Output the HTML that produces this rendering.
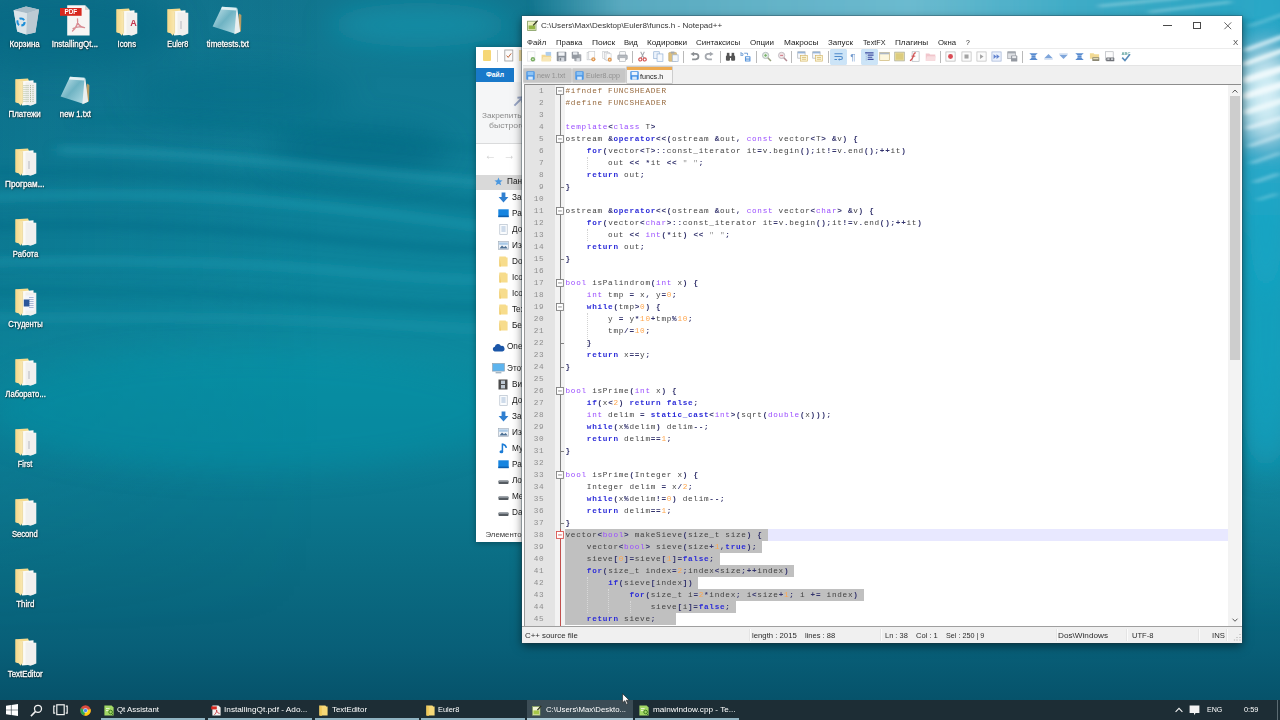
<!DOCTYPE html>
<html lang="ru"><head><meta charset="utf-8"><title>Desktop</title>
<style>
html,body{margin:0;padding:0;background:#0a6e86;}
body{width:1280px;height:720px;overflow:hidden;font-family:"Liberation Sans",sans-serif;}
#screen{position:relative;width:1280px;height:720px;overflow:hidden;background:#0b7d96;filter:blur(.32px);}
.t{position:absolute;white-space:nowrap;transform-origin:0 50%;}
.r{position:absolute;}
.abs{position:absolute;}
svg{position:absolute;overflow:visible;}
.lbl{position:absolute;white-space:nowrap;color:#fff;font-size:8.2px;line-height:10px;text-align:center;-webkit-text-stroke:.3px #fff;
  text-shadow:.5px 1px 1.5px rgba(0,0,0,.9),0 0 2.5px rgba(0,0,0,.55);transform-origin:50% 50%;}
.mono{font-family:"Liberation Mono",monospace;}
pre{margin:0;}
.code{position:absolute;left:565.5px;top:85.1px;font-family:"Liberation Mono",monospace;font-size:7.7px;line-height:12px;color:#424242;white-space:pre;letter-spacing:.714px;}
.code div{height:12px;}
.ln{position:absolute;left:524px;top:85.1px;width:20.4px;text-align:right;font-family:"Liberation Mono",monospace;font-size:7.7px;letter-spacing:.714px;line-height:12px;color:#8e8e8e;}
.ln div{height:12px;}
.k{color:#2b2bd8;font-weight:bold;}
.ty{color:#9a4dff;}
.pp{color:#96683c;}
.n{color:#ffa64d;}
.o{color:#34346e;font-weight:bold;}
.s{color:#909090;}
.sel{background:#c0c0c0;}

</style></head>
<body>
<div id="screen">
<svg id="bg" style="left:0;top:0" width="1280" height="720" viewBox="0 0 1280 720"><defs><linearGradient id="bgv" x1="0" y1="0" x2="0" y2="1"><stop offset="0" stop-color="#12768f"/><stop offset=".16" stop-color="#0f7b94"/><stop offset=".3" stop-color="#0d8199"/><stop offset=".5" stop-color="#0d8a9f"/><stop offset=".62" stop-color="#0c8097"/><stop offset=".8" stop-color="#0a6b82"/><stop offset=".9" stop-color="#085f78"/><stop offset=".975" stop-color="#06526a"/><stop offset="1" stop-color="#06526a"/></linearGradient><linearGradient id="bgh" x1="0" y1="0" x2="1" y2="0"><stop offset="0" stop-color="#0a5a78" stop-opacity=".22"/><stop offset=".25" stop-color="#0a5a78" stop-opacity="0"/><stop offset=".6" stop-color="#35c0dc" stop-opacity="0"/><stop offset="1" stop-color="#35c0dc" stop-opacity=".38"/></linearGradient><linearGradient id="mkg" x1="0" y1="0" x2="0" y2="1"><stop offset=".35" stop-color="#fff"/><stop offset=".88" stop-color="#000"/></linearGradient><mask id="mk" maskUnits="userSpaceOnUse" x="0" y="0" width="1280" height="720"><rect width="1280" height="720" fill="url(#mkg)"/></mask><linearGradient id="tsg" x1="0" y1="0" x2="1" y2="0"><stop offset="0" stop-color="#62b0c5" stop-opacity="0"/><stop offset=".12" stop-color="#62b0c5" stop-opacity=".9"/><stop offset=".5" stop-color="#74c0d4" stop-opacity=".92"/><stop offset=".72" stop-color="#45b2cd" stop-opacity=".85"/><stop offset="1" stop-color="#27a6c6" stop-opacity=".85"/></linearGradient><filter id="bl8" x="-20%" y="-100%" width="140%" height="300%"><feGaussianBlur stdDeviation="7 4"/></filter><filter id="bl3" x="-20%" y="-100%" width="140%" height="300%"><feGaussianBlur stdDeviation="3 1.6"/></filter><filter id="bl14" x="-30%" y="-60%" width="160%" height="220%"><feGaussianBlur stdDeviation="14"/></filter></defs><rect width="1280" height="720" fill="url(#bgv)"/><rect width="1280" height="720" fill="url(#bgh)" mask="url(#mk)"/><g filter="url(#bl14)"><ellipse cx="360" cy="150" rx="90" ry="26" fill="#0a6580" opacity=".55"/><ellipse cx="240" cy="95" rx="110" ry="30" fill="#0a6882" opacity=".4"/><ellipse cx="60" cy="30" rx="120" ry="40" fill="#0a6480" opacity=".45"/><ellipse cx="420" cy="25" rx="90" ry="22" fill="#16a0b8" opacity=".5"/><ellipse cx="250" cy="410" rx="260" ry="60" fill="#1095aa" opacity=".4"/><ellipse cx="1266" cy="120" rx="34" ry="170" fill="#27aacb" opacity=".9"/><ellipse cx="1266" cy="96" rx="26" ry="44" fill="#e4f6fa" opacity=".95"/><ellipse cx="1266" cy="330" rx="32" ry="140" fill="#0fa2c2" opacity=".7"/></g><rect x="530" y="-6" width="760" height="24" fill="url(#tsg)" filter="url(#bl3)"/><g filter="url(#bl8)" fill="none" stroke-linecap="round"><path d="M60 150 Q180 152 290 164 T500 184" stroke="#27a8be" stroke-width="7" opacity=".5"/><path d="M-10 197 Q120 192 220 198 T500 229" stroke="#25a6bc" stroke-width="7" opacity=".5"/><path d="M-10 226 Q160 222 300 236 T500 250" stroke="#0a6a85" stroke-width="8" opacity=".5"/><path d="M-10 262 Q200 258 330 270 T500 279" stroke="#27a8be" stroke-width="6" opacity=".45"/><path d="M-10 292 Q200 290 330 300 T500 306" stroke="#0a6f88" stroke-width="8" opacity=".45"/><path d="M-10 318 Q200 316 330 322 T500 330" stroke="#22a2b8" stroke-width="6" opacity=".4"/><path d="M-10 172 Q140 170 260 182 T500 206" stroke="#0a6a85" stroke-width="8" opacity=".45"/><path d="M80 120 Q200 118 300 130 T500 150" stroke="#0b6c87" stroke-width="8" opacity=".35"/></g><g filter="url(#bl3)" fill="none" stroke="#f2fbfd" stroke-linecap="round"><path d="M1246 50 L1284 36" stroke-width="4" opacity=".75"/><path d="M1245 64 L1284 50" stroke-width="5" opacity=".85"/><path d="M1246 80 L1284 68" stroke-width="7" opacity=".9"/><path d="M1246 96 L1284 84" stroke-width="7" opacity=".9"/><path d="M1247 112 L1284 100" stroke-width="6" opacity=".8"/><path d="M1248 128 L1284 117" stroke-width="4" opacity=".65"/><path d="M1250 146 L1284 134" stroke-width="3" opacity=".55"/><path d="M1252 163 L1280 153" stroke-width="2.500" opacity=".45"/><path d="M1255 182 L1278 174" stroke-width="2.500" opacity=".4"/><path d="M1258 200 L1276 194" stroke-width="2" opacity=".35"/><path d="M1250 26 L1284 14" stroke-width="2.500" opacity=".3"/><path d="M1100 6 L1180 -2" stroke-width="3" opacity=".3"/><path d="M1150 12 L1230 2" stroke-width="3" opacity=".3"/></g></svg>
<svg style="left:12.5px;top:6.0px" width="27" height="30" viewBox="0 0 27 30"><path d="M0.6 4.2 L13 0.6 L26 3.6 L22.4 26.4 L13.2 28.6 L4.2 25.4 Z" fill="#cfdbe3" opacity=".96"/><path d="M0.6 4.2 L13 0.6 L26 3.6 L14 7.2 Z" fill="#a9bcc8"/><path d="M14 7.2 L26 3.6 L22.4 26.4 L13.2 28.6 Z" fill="#bccad3"/><path d="M0.6 4.2 L14 7.2 L13.2 28.6 L4.2 25.4 Z" fill="#dbe5ea"/><circle cx="8" cy="16" r="3.6" fill="none" stroke="#1d8fd8" stroke-width="2" stroke-dasharray="5.2 2.3"/></svg>
<span class="lbl" style="left:9.38px;top:39.80px;transform:scaleX(0.9734)">Корзина</span>
<svg style="left:14.5px;top:77.8px" width="22" height="29" viewBox="0 0 22 29"><defs><linearGradient id="fg" x1="0" y1="0" x2="1" y2="0"><stop offset="0" stop-color="#f4d88a"/><stop offset="1" stop-color="#f9e8b2"/></linearGradient></defs><path d="M0.5 1.2 L13 0.6 L14 3 L17.5 3 L17.5 24 L0.5 24 Z" fill="#f4da8e"/><path d="M7 3.2 L18.5 2.2 L18.5 26.5 L7 27.5 Z" fill="#fbfaf6"/><path d="M10.5 4.2 L21.3 4.8 L21.3 25.6 L15.5 27.8 L10.5 26.2 Z" fill="#f1f0ee"/><path d="M9 7v17M11 7v17M13 7v17M15.5 7v17M18 7v17" stroke="#9fb08a" stroke-width=".8" stroke-dasharray="1.2 .8"/><path d="M0.5 1.2 L7.6 3.4 L7.6 24.8 L5.6 27.6 L3.6 25.2 L0.5 24.6 Z" fill="url(#fg)"/><path d="M7.6 3.4 L7.6 24.8 L5.6 27.6" fill="none" stroke="#d9b95f" stroke-width=".5" opacity=".7"/></svg>
<span class="lbl" style="left:8.17px;top:109.80px;transform:scaleX(0.9743)">Платежи</span>
<svg style="left:14.5px;top:147.8px" width="22" height="29" viewBox="0 0 22 29"><defs><linearGradient id="fg" x1="0" y1="0" x2="1" y2="0"><stop offset="0" stop-color="#f4d88a"/><stop offset="1" stop-color="#f9e8b2"/></linearGradient></defs><path d="M0.5 1.2 L13 0.6 L14 3 L17.5 3 L17.5 24 L0.5 24 Z" fill="#f4da8e"/><path d="M7 3.2 L18.5 2.2 L18.5 26.5 L7 27.5 Z" fill="#fbfaf6"/><path d="M10.5 4.2 L21.3 4.8 L21.3 25.6 L15.5 27.8 L10.5 26.2 Z" fill="#f1f0ee"/><path d="M14 13v8" stroke="#b7b9c0" stroke-width="1"/><path d="M0.5 1.2 L7.6 3.4 L7.6 24.8 L5.6 27.6 L3.6 25.2 L0.5 24.6 Z" fill="url(#fg)"/><path d="M7.6 3.4 L7.6 24.8 L5.6 27.6" fill="none" stroke="#d9b95f" stroke-width=".5" opacity=".7"/></svg>
<span class="lbl" style="left:5.45px;top:179.80px;transform:scaleX(0.9976)">Програм...</span>
<svg style="left:14.5px;top:217.8px" width="22" height="29" viewBox="0 0 22 29"><defs><linearGradient id="fg" x1="0" y1="0" x2="1" y2="0"><stop offset="0" stop-color="#f4d88a"/><stop offset="1" stop-color="#f9e8b2"/></linearGradient></defs><path d="M0.5 1.2 L13 0.6 L14 3 L17.5 3 L17.5 24 L0.5 24 Z" fill="#f4da8e"/><path d="M7 3.2 L18.5 2.2 L18.5 26.5 L7 27.5 Z" fill="#fbfaf6"/><path d="M10.5 4.2 L21.3 4.8 L21.3 25.6 L15.5 27.8 L10.5 26.2 Z" fill="#f1f0ee"/><path d="M0.5 1.2 L7.6 3.4 L7.6 24.8 L5.6 27.6 L3.6 25.2 L0.5 24.6 Z" fill="url(#fg)"/><path d="M7.6 3.4 L7.6 24.8 L5.6 27.6" fill="none" stroke="#d9b95f" stroke-width=".5" opacity=".7"/></svg>
<span class="lbl" style="left:11.72px;top:249.80px;transform:scaleX(0.9424)">Работа</span>
<svg style="left:14.5px;top:287.8px" width="22" height="29" viewBox="0 0 22 29"><defs><linearGradient id="fg" x1="0" y1="0" x2="1" y2="0"><stop offset="0" stop-color="#f4d88a"/><stop offset="1" stop-color="#f9e8b2"/></linearGradient></defs><path d="M0.5 1.2 L13 0.6 L14 3 L17.5 3 L17.5 24 L0.5 24 Z" fill="#f4da8e"/><path d="M7 3.2 L18.5 2.2 L18.5 26.5 L7 27.5 Z" fill="#fbfaf6"/><path d="M10.5 4.2 L21.3 4.8 L21.3 25.6 L15.5 27.8 L10.5 26.2 Z" fill="#f1f0ee"/><rect x="10" y="7.500" width="9.500" height="15" fill="#f4f6fb"/><path d="M14 9.500h4.600M14 11.500h4.600M14 13.500h4.600M14 15.500h4.600M14 17.500h4.600M14 19.500h4.600" stroke="#8d9fc4" stroke-width=".7"/><rect x="8.800" y="11.500" width="5.600" height="7" fill="#2b579a"/><path d="M0.5 1.2 L7.6 3.4 L7.6 24.8 L5.6 27.6 L3.6 25.2 L0.5 24.6 Z" fill="url(#fg)"/><path d="M7.6 3.4 L7.6 24.8 L5.6 27.6" fill="none" stroke="#d9b95f" stroke-width=".5" opacity=".7"/></svg>
<span class="lbl" style="left:6.69px;top:319.80px;transform:scaleX(0.9294)">Студенты</span>
<svg style="left:14.5px;top:357.8px" width="22" height="29" viewBox="0 0 22 29"><defs><linearGradient id="fg" x1="0" y1="0" x2="1" y2="0"><stop offset="0" stop-color="#f4d88a"/><stop offset="1" stop-color="#f9e8b2"/></linearGradient></defs><path d="M0.5 1.2 L13 0.6 L14 3 L17.5 3 L17.5 24 L0.5 24 Z" fill="#f4da8e"/><path d="M7 3.2 L18.5 2.2 L18.5 26.5 L7 27.5 Z" fill="#fbfaf6"/><path d="M10.5 4.2 L21.3 4.8 L21.3 25.6 L15.5 27.8 L10.5 26.2 Z" fill="#f1f0ee"/><path d="M14 13v8" stroke="#b7b9c0" stroke-width="1"/><path d="M0.5 1.2 L7.6 3.4 L7.6 24.8 L5.6 27.6 L3.6 25.2 L0.5 24.6 Z" fill="url(#fg)"/><path d="M7.6 3.4 L7.6 24.8 L5.6 27.6" fill="none" stroke="#d9b95f" stroke-width=".5" opacity=".7"/></svg>
<span class="lbl" style="left:3.65px;top:389.80px;transform:scaleX(0.9376)">Лаборато...</span>
<svg style="left:14.5px;top:427.8px" width="22" height="29" viewBox="0 0 22 29"><defs><linearGradient id="fg" x1="0" y1="0" x2="1" y2="0"><stop offset="0" stop-color="#f4d88a"/><stop offset="1" stop-color="#f9e8b2"/></linearGradient></defs><path d="M0.5 1.2 L13 0.6 L14 3 L17.5 3 L17.5 24 L0.5 24 Z" fill="#f4da8e"/><path d="M7 3.2 L18.5 2.2 L18.5 26.5 L7 27.5 Z" fill="#fbfaf6"/><path d="M10.5 4.2 L21.3 4.8 L21.3 25.6 L15.5 27.8 L10.5 26.2 Z" fill="#f1f0ee"/><path d="M14 13v8" stroke="#b7b9c0" stroke-width="1"/><path d="M0.5 1.2 L7.6 3.4 L7.6 24.8 L5.6 27.6 L3.6 25.2 L0.5 24.6 Z" fill="url(#fg)"/><path d="M7.6 3.4 L7.6 24.8 L5.6 27.6" fill="none" stroke="#d9b95f" stroke-width=".5" opacity=".7"/></svg>
<span class="lbl" style="left:17.28px;top:459.80px;transform:scaleX(0.9097)">First</span>
<svg style="left:14.5px;top:497.8px" width="22" height="29" viewBox="0 0 22 29"><defs><linearGradient id="fg" x1="0" y1="0" x2="1" y2="0"><stop offset="0" stop-color="#f4d88a"/><stop offset="1" stop-color="#f9e8b2"/></linearGradient></defs><path d="M0.5 1.2 L13 0.6 L14 3 L17.5 3 L17.5 24 L0.5 24 Z" fill="#f4da8e"/><path d="M7 3.2 L18.5 2.2 L18.5 26.5 L7 27.5 Z" fill="#fbfaf6"/><path d="M10.5 4.2 L21.3 4.8 L21.3 25.6 L15.5 27.8 L10.5 26.2 Z" fill="#f1f0ee"/><path d="M0.5 1.2 L7.6 3.4 L7.6 24.8 L5.6 27.6 L3.6 25.2 L0.5 24.6 Z" fill="url(#fg)"/><path d="M7.6 3.4 L7.6 24.8 L5.6 27.6" fill="none" stroke="#d9b95f" stroke-width=".5" opacity=".7"/></svg>
<span class="lbl" style="left:11.10px;top:529.80px;transform:scaleX(0.9349)">Second</span>
<svg style="left:14.5px;top:567.8px" width="22" height="29" viewBox="0 0 22 29"><defs><linearGradient id="fg" x1="0" y1="0" x2="1" y2="0"><stop offset="0" stop-color="#f4d88a"/><stop offset="1" stop-color="#f9e8b2"/></linearGradient></defs><path d="M0.5 1.2 L13 0.6 L14 3 L17.5 3 L17.5 24 L0.5 24 Z" fill="#f4da8e"/><path d="M7 3.2 L18.5 2.2 L18.5 26.5 L7 27.5 Z" fill="#fbfaf6"/><path d="M10.5 4.2 L21.3 4.8 L21.3 25.6 L15.5 27.8 L10.5 26.2 Z" fill="#f1f0ee"/><path d="M0.5 1.2 L7.6 3.4 L7.6 24.8 L5.6 27.6 L3.6 25.2 L0.5 24.6 Z" fill="url(#fg)"/><path d="M7.6 3.4 L7.6 24.8 L5.6 27.6" fill="none" stroke="#d9b95f" stroke-width=".5" opacity=".7"/></svg>
<span class="lbl" style="left:16.03px;top:599.80px;transform:scaleX(0.9769)">Third</span>
<svg style="left:14.5px;top:637.8px" width="22" height="29" viewBox="0 0 22 29"><defs><linearGradient id="fg" x1="0" y1="0" x2="1" y2="0"><stop offset="0" stop-color="#f4d88a"/><stop offset="1" stop-color="#f9e8b2"/></linearGradient></defs><path d="M0.5 1.2 L13 0.6 L14 3 L17.5 3 L17.5 24 L0.5 24 Z" fill="#f4da8e"/><path d="M7 3.2 L18.5 2.2 L18.5 26.5 L7 27.5 Z" fill="#fbfaf6"/><path d="M10.5 4.2 L21.3 4.8 L21.3 25.6 L15.5 27.8 L10.5 26.2 Z" fill="#f1f0ee"/><path d="M0.5 1.2 L7.6 3.4 L7.6 24.8 L5.6 27.6 L3.6 25.2 L0.5 24.6 Z" fill="url(#fg)"/><path d="M7.6 3.4 L7.6 24.8 L5.6 27.6" fill="none" stroke="#d9b95f" stroke-width=".5" opacity=".7"/></svg>
<span class="lbl" style="left:7.27px;top:669.80px;transform:scaleX(0.9600)">TextEditor</span>
<svg style="left:58.5px;top:5.0px" width="32" height="32" viewBox="0 0 32 32"><path d="M8.2 0.2 L26 0.2 L30.6 5 L30.6 30.6 L8.2 30.6 Z" fill="#f7f5f4"/><path d="M26 0.2 L30.6 5 L26 5 Z" fill="#d8d4d2"/><path d="M18.5 14 C19.5 18 17 23 13.5 26 M18.5 14 C18 19 21 22 25.5 22.6 M14 23.5 C17 21.6 21 21.4 25.5 22.6" fill="none" stroke="#d98d94" stroke-width="1.3" stroke-linecap="round"/><rect x="1" y="3" width="21.6" height="7.8" fill="#d8281f"/><text x="11.8" y="9.3" font-family="Liberation Sans, sans-serif" font-weight="bold" font-size="6.4" fill="#fff" text-anchor="middle">PDF</text></svg>
<span class="lbl" style="left:51.27px;top:39.80px;transform:scaleX(0.9697)">InstallingQt...</span>
<svg style="left:115.8px;top:7.8px" width="22" height="29" viewBox="0 0 22 29"><defs><linearGradient id="fg" x1="0" y1="0" x2="1" y2="0"><stop offset="0" stop-color="#f4d88a"/><stop offset="1" stop-color="#f9e8b2"/></linearGradient></defs><path d="M0.5 1.2 L13 0.6 L14 3 L17.5 3 L17.5 24 L0.5 24 Z" fill="#f4da8e"/><path d="M7 3.2 L18.5 2.2 L18.5 26.5 L7 27.5 Z" fill="#fbfaf6"/><path d="M10.5 4.2 L21.3 4.8 L21.3 25.6 L15.5 27.8 L10.5 26.2 Z" fill="#f1f0ee"/><text x="14.2" y="17.5" font-family="Liberation Sans, sans-serif" font-weight="bold" font-size="9" fill="#c2334d">A</text><path d="M0.5 1.2 L7.6 3.4 L7.6 24.8 L5.6 27.6 L3.6 25.2 L0.5 24.6 Z" fill="url(#fg)"/><path d="M7.6 3.4 L7.6 24.8 L5.6 27.6" fill="none" stroke="#d9b95f" stroke-width=".5" opacity=".7"/></svg>
<span class="lbl" style="left:116.95px;top:39.90px;transform:scaleX(0.9440)">Icons</span>
<svg style="left:166.5px;top:7.8px" width="22" height="29" viewBox="0 0 22 29"><defs><linearGradient id="fg" x1="0" y1="0" x2="1" y2="0"><stop offset="0" stop-color="#f4d88a"/><stop offset="1" stop-color="#f9e8b2"/></linearGradient></defs><path d="M0.5 1.2 L13 0.6 L14 3 L17.5 3 L17.5 24 L0.5 24 Z" fill="#f4da8e"/><path d="M7 3.2 L18.5 2.2 L18.5 26.5 L7 27.5 Z" fill="#fbfaf6"/><path d="M10.5 4.2 L21.3 4.8 L21.3 25.6 L15.5 27.8 L10.5 26.2 Z" fill="#f1f0ee"/><path d="M14 13v8" stroke="#b7b9c0" stroke-width="1"/><path d="M0.5 1.2 L7.6 3.4 L7.6 24.8 L5.6 27.6 L3.6 25.2 L0.5 24.6 Z" fill="url(#fg)"/><path d="M7.6 3.4 L7.6 24.8 L5.6 27.6" fill="none" stroke="#d9b95f" stroke-width=".5" opacity=".7"/></svg>
<span class="lbl" style="left:165.65px;top:39.90px;transform:scaleX(0.8860)">Euler8</span>
<svg style="left:212.0px;top:6.0px" width="31" height="29" viewBox="0 0 31 29"><defs><linearGradient id="ng" x1="0" y1="0" x2="1" y2="1"><stop offset="0" stop-color="#cfe9ef"/><stop offset=".5" stop-color="#6fb3c3"/><stop offset="1" stop-color="#b4dde6"/></linearGradient></defs><path d="M27 7.500 L29.400 9 L29 25.200 L24 27.400 Z" fill="#b79b63"/><path d="M11 1.4 L25.4 2.4 L28.2 25.8 L22.6 28.2 Z" fill="#e9eff0"/><path d="M10 0.8 L24.6 1.8 L22.4 27.6 L0.6 20.6 Z" fill="url(#ng)"/><path d="M10 0.8 L24.6 1.8 L24.3 4.6 L9 3.4 Z" fill="#eef7f8" opacity=".85"/></svg>
<span class="lbl" style="left:206.33px;top:39.90px;transform:scaleX(0.9694)">timetests.txt</span>
<svg style="left:60.0px;top:76.0px" width="31" height="29" viewBox="0 0 31 29"><defs><linearGradient id="ng" x1="0" y1="0" x2="1" y2="1"><stop offset="0" stop-color="#cfe9ef"/><stop offset=".5" stop-color="#6fb3c3"/><stop offset="1" stop-color="#b4dde6"/></linearGradient></defs><path d="M27 7.500 L29.400 9 L29 25.200 L24 27.400 Z" fill="#b79b63"/><path d="M11 1.4 L25.4 2.4 L28.2 25.8 L22.6 28.2 Z" fill="#e9eff0"/><path d="M10 0.8 L24.6 1.8 L22.4 27.6 L0.6 20.6 Z" fill="url(#ng)"/><path d="M10 0.8 L24.6 1.8 L24.3 4.6 L9 3.4 Z" fill="#eef7f8" opacity=".85"/></svg>
<span class="lbl" style="left:58.99px;top:109.80px;transform:scaleX(0.9508)">new 1.txt</span>
<div class="r" style="left:476.3px;top:46.9px;width:53.69999999999999px;height:494.9px;background:#ffffff;box-shadow:0 1px 6px rgba(0,0,0,.35);"></div>
<div class="r" style="left:482.6px;top:50.4px;width:8.4px;height:10.8px;background:#f6d776;border-radius:1px;"></div>
<div class="r" style="left:497.2px;top:50px;width:0.8px;height:11.5px;background:#d0d0d0;"></div>
<svg style="left:503.600px;top:49.200px" width="10" height="13" viewBox="0 0 10 13"><rect x=".8" y="1" width="8" height="11" fill="#fbfbfb" stroke="#9c9c9c" stroke-width=".8"/><path d="M2.6 6.6l1.6 1.8 3-4" fill="none" stroke="#c0673a" stroke-width="1"/></svg>
<div class="r" style="left:518.8px;top:50.4px;width:6px;height:10.8px;background:#f3dfa0;"></div>
<div class="r" style="left:476.3px;top:67.5px;width:38px;height:14.5px;background:#1979ca;"></div>
<span class="t" style="left:486.00px;top:70.24px;font-size:7.6px;line-height:9.12px;color:#fff;font-weight:bold;transform:scaleX(0.8905);">Файл</span>
<div class="r" style="left:476.3px;top:82px;width:53.69999999999999px;height:61.5px;background:#f5f6f7;"></div>
<div class="r" style="left:476.3px;top:143px;width:53.69999999999999px;height:1px;background:#dadbdc;"></div>
<svg style="left:511.500px;top:94px" width="14" height="14" viewBox="0 0 14 14"><path d="M2.400 11.600 L9 5 M5.400 3.800 L10.600 3.400 L10.200 8.600" fill="none" stroke="#98a6c6" stroke-width="1.900"/></svg>
<span class="t" style="left:482.00px;top:110.68px;font-size:7.7px;line-height:9.24px;color:#8c8c8c;transform:scaleX(1.0726);">Закрепить на</span>
<span class="t" style="left:488.50px;top:120.58px;font-size:7.7px;line-height:9.24px;color:#8c8c8c;transform:scaleX(1.1279);">быстрого</span>
<span class="t" style="left:484.60px;top:148.10px;font-size:12px;line-height:14.40px;color:#cdcdcd;">←</span>
<span class="t" style="left:503.60px;top:148.10px;font-size:12px;line-height:14.40px;color:#cdcdcd;">→</span>
<div class="r" style="left:476.3px;top:175px;width:53.69999999999999px;height:14.5px;background:#d9d9d9;"></div>
<svg style="left:494.4px;top:177.2px" width="9" height="9" viewBox="0 0 11 11"><path d="M5.5 .6 L6.9 4 L10.5 4.2 L7.7 6.5 L8.7 10.2 L5.5 8.2 L2.3 10.2 L3.3 6.5 L.5 4.2 L4.1 4 Z" fill="#4a98e0"/></svg>
<span class="t" style="left:507.00px;top:177.28px;font-size:8.2px;line-height:9.84px;color:#1a1a1a;">Панель</span>
<svg style="left:498px;top:192.3px" width="11" height="11" viewBox="0 0 11 11"><path d="M3.6 .5h3.8v4.6h3L5.5 10.4 .6 5.100h3z" fill="#2f7fd0"/></svg>
<span class="t" style="left:512.00px;top:193.08px;font-size:8.2px;line-height:9.84px;color:#1a1a1a;">Загрузки</span>
<svg style="left:498px;top:209.3px" width="11" height="9" viewBox="0 0 11 9"><rect x=".3" y=".3" width="10.4" height="7.6" fill="#1584e0"/><rect x=".3" y="6.6" width="10.4" height="1.6" fill="#0c5fb0"/></svg>
<span class="t" style="left:512.00px;top:209.08px;font-size:8.2px;line-height:9.84px;color:#1a1a1a;">Рабочий</span>
<svg style="left:499px;top:224.3px" width="9" height="11" viewBox="0 0 9 11"><rect x=".8" y=".5" width="7.4" height="10" fill="#fafcfe" stroke="#a9b6c4" stroke-width=".6"/><path d="M2.4 3h4.2M2.4 5h4.2M2.4 7h4.2" stroke="#7d9fc6" stroke-width=".7"/></svg>
<span class="t" style="left:512.00px;top:225.08px;font-size:8.2px;line-height:9.84px;color:#1a1a1a;">Документы</span>
<svg style="left:498px;top:241.3px" width="11" height="9" viewBox="0 0 11 9"><rect x=".4" y=".4" width="10.2" height="8" fill="#eef3f8" stroke="#9aa8b6" stroke-width=".6"/><path d="M1.4 7.4 L4 4.4 L6 6.2 L7.6 5 L9.8 7.4 Z" fill="#4b6f93"/><rect x="1.2" y="1.4" width="8.6" height="2.4" fill="#a9c9e6"/></svg>
<span class="t" style="left:512.00px;top:241.08px;font-size:8.2px;line-height:9.84px;color:#1a1a1a;">Изображ</span>
<svg style="left:499px;top:256.3px" width="9" height="11" viewBox="0 0 9 11"><path d="M.4 .6h6.2l.8 1h1.2v9H.4z" fill="#f7dc8c"/><path d="M.4 .6v10h1.6z" fill="#efca68"/></svg>
<span class="t" style="left:512.00px;top:257.08px;font-size:8.2px;line-height:9.84px;color:#1a1a1a;">Docs</span>
<svg style="left:499px;top:272.3px" width="9" height="11" viewBox="0 0 9 11"><path d="M.4 .6h6.2l.8 1h1.2v9H.4z" fill="#f7dc8c"/><path d="M.4 .6v10h1.6z" fill="#efca68"/></svg>
<span class="t" style="left:512.00px;top:273.08px;font-size:8.2px;line-height:9.84px;color:#1a1a1a;">Icons</span>
<svg style="left:499px;top:288.3px" width="9" height="11" viewBox="0 0 9 11"><path d="M.4 .6h6.2l.8 1h1.2v9H.4z" fill="#f7dc8c"/><path d="M.4 .6v10h1.6z" fill="#efca68"/></svg>
<span class="t" style="left:512.00px;top:289.08px;font-size:8.2px;line-height:9.84px;color:#1a1a1a;">Icons</span>
<svg style="left:499px;top:304.3px" width="9" height="11" viewBox="0 0 9 11"><path d="M.4 .6h6.2l.8 1h1.2v9H.4z" fill="#f7dc8c"/><path d="M.4 .6v10h1.6z" fill="#efca68"/></svg>
<span class="t" style="left:512.00px;top:305.08px;font-size:8.2px;line-height:9.84px;color:#1a1a1a;">TextEd</span>
<svg style="left:499px;top:320.3px" width="9" height="11" viewBox="0 0 9 11"><path d="M.4 .6h6.2l.8 1h1.2v9H.4z" fill="#f7dc8c"/><path d="M.4 .6v10h1.6z" fill="#efca68"/></svg>
<span class="t" style="left:512.00px;top:321.08px;font-size:8.2px;line-height:9.84px;color:#1a1a1a;">Белый</span>
<svg style="left:492px;top:342.5px" width="13" height="9" viewBox="0 0 13 9"><path d="M2.6 8.4a2.4 2.4 0 0 1 .2-4.700a3.300 3.300 0 0 1 6.200-.8a2.800 2.800 0 0 1 1.400 5.500z" fill="#1b56a8"/></svg>
<span class="t" style="left:507.00px;top:342.28px;font-size:8.2px;line-height:9.84px;color:#1a1a1a;">OneDrive</span>
<svg style="left:492px;top:363px" width="13" height="11" viewBox="0 0 13 11"><rect x=".6" y=".5" width="11.8" height="7.6" fill="#5db4ee" stroke="#8fa3b4" stroke-width=".7"/><rect x="3.6" y="9.200" width="5.8" height="1.1" fill="#8fa3b4"/></svg>
<span class="t" style="left:507.00px;top:363.68px;font-size:8.2px;line-height:9.84px;color:#1a1a1a;">Этот комп</span>
<svg style="left:498px;top:379.1px" width="10" height="11" viewBox="0 0 10 11"><rect x=".5" y=".5" width="9" height="10" fill="#4c4c4c"/><rect x="3" y="1.6" width="4" height="3.400" fill="#bfc9d3"/><rect x="3" y="6" width="4" height="3.400" fill="#bfc9d3"/></svg>
<span class="t" style="left:512.00px;top:379.88px;font-size:8.2px;line-height:9.84px;color:#1a1a1a;">Видео</span>
<svg style="left:499px;top:395.1px" width="9" height="11" viewBox="0 0 9 11"><rect x=".8" y=".5" width="7.4" height="10" fill="#fafcfe" stroke="#a9b6c4" stroke-width=".6"/><path d="M2.4 3h4.2M2.4 5h4.2M2.4 7h4.2" stroke="#7d9fc6" stroke-width=".7"/></svg>
<span class="t" style="left:512.00px;top:395.88px;font-size:8.2px;line-height:9.84px;color:#1a1a1a;">Документы</span>
<svg style="left:498px;top:411.1px" width="11" height="11" viewBox="0 0 11 11"><path d="M3.6 .5h3.8v4.6h3L5.5 10.4 .6 5.100h3z" fill="#2f7fd0"/></svg>
<span class="t" style="left:512.00px;top:411.88px;font-size:8.2px;line-height:9.84px;color:#1a1a1a;">Загрузки</span>
<svg style="left:498px;top:428.1px" width="11" height="9" viewBox="0 0 11 9"><rect x=".4" y=".4" width="10.2" height="8" fill="#eef3f8" stroke="#9aa8b6" stroke-width=".6"/><path d="M1.4 7.4 L4 4.4 L6 6.2 L7.6 5 L9.8 7.4 Z" fill="#4b6f93"/><rect x="1.2" y="1.4" width="8.6" height="2.4" fill="#a9c9e6"/></svg>
<span class="t" style="left:512.00px;top:427.88px;font-size:8.2px;line-height:9.84px;color:#1a1a1a;">Изображ</span>
<svg style="left:499px;top:443.1px" width="9" height="11" viewBox="0 0 9 11"><path d="M3.4 .6 L3.4 8.200 M3.4 .9 C5.400 1.400 7 2.600 7.400 4.800" fill="none" stroke="#1a7bd6" stroke-width="1.500"/><ellipse cx="2.400" cy="8.800" rx="1.900" ry="1.500" fill="#1a7bd6"/></svg>
<span class="t" style="left:512.00px;top:443.88px;font-size:8.2px;line-height:9.84px;color:#1a1a1a;">Музыка</span>
<svg style="left:498px;top:460.1px" width="11" height="9" viewBox="0 0 11 9"><rect x=".3" y=".3" width="10.4" height="7.6" fill="#1584e0"/><rect x=".3" y="6.6" width="10.4" height="1.6" fill="#0c5fb0"/></svg>
<span class="t" style="left:512.00px;top:459.88px;font-size:8.2px;line-height:9.84px;color:#1a1a1a;">Рабочий</span>
<svg style="left:498px;top:479.1px" width="11" height="6" viewBox="0 0 11 6"><rect x=".5" y="1.500" width="10" height="3.600" rx=".8" fill="#555b61"/><rect x=".5" y="1.500" width="10" height="1.200" rx=".6" fill="#9aa2a9"/></svg>
<span class="t" style="left:512.00px;top:475.88px;font-size:8.2px;line-height:9.84px;color:#1a1a1a;">Локальн</span>
<svg style="left:498px;top:495.1px" width="11" height="6" viewBox="0 0 11 6"><rect x=".5" y="1.500" width="10" height="3.600" rx=".8" fill="#555b61"/><rect x=".5" y="1.500" width="10" height="1.200" rx=".6" fill="#9aa2a9"/></svg>
<span class="t" style="left:512.00px;top:491.88px;font-size:8.2px;line-height:9.84px;color:#1a1a1a;">Media</span>
<svg style="left:498px;top:511.1px" width="11" height="6" viewBox="0 0 11 6"><rect x=".5" y="1.500" width="10" height="3.600" rx=".8" fill="#555b61"/><rect x=".5" y="1.500" width="10" height="1.200" rx=".6" fill="#9aa2a9"/></svg>
<span class="t" style="left:512.00px;top:507.88px;font-size:8.2px;line-height:9.84px;color:#1a1a1a;">Data</span>
<span class="t" style="left:485.50px;top:529.92px;font-size:7.8px;line-height:9.36px;color:#3c3c3c;">Элементов: 21</span>
<div class="r" style="left:522px;top:16px;width:720.4000000000001px;height:626.5px;background:#ffffff;box-shadow:0 3px 9px rgba(0,0,0,.5),0 0 0 .6px rgba(50,80,95,.6);"></div>
<svg style="left:527px;top:19.700px" width="12" height="11" viewBox="0 0 12 11"><rect x=".6" y="1.200" width="8.400" height="9.200" fill="#f2f5dc" stroke="#7f9a5a" stroke-width=".8"/><rect x="1.500" y="5.400" width="6.600" height="4" fill="#94b545"/><rect x="1.500" y="2.400" width="6.600" height="2.400" fill="#e9efb6"/><path d="M6.200 5.400 L10.600 .6" stroke="#30331f" stroke-width="1.300"/></svg>
<span class="t" style="left:541.30px;top:21.10px;font-size:8px;line-height:9.60px;color:#333;transform:scaleX(1.0063);">C:\Users\Max\Desktop\Euler8\funcs.h - Notepad++</span>
<div class="r" style="left:1162.6px;top:24.9px;width:9.8px;height:0.9px;background:#4a4a4a;"></div>
<div class="r" style="left:1193px;top:22.100px;width:5.600px;height:5.400px;border:.8px solid #4a4a4a;box-sizing:content-box"></div>
<svg style="left:1223.600px;top:21.800px" width="8" height="8" viewBox="0 0 8 8"><path d="M.4 .4l6.800 6.800M7.200 .4l-6.800 6.800" stroke="#4a4a4a" stroke-width=".85"/></svg>
<span class="t" style="left:527.10px;top:37.60px;font-size:8px;line-height:9.60px;color:#1c1c1c;transform:scaleX(0.9762);">Файл</span>
<span class="t" style="left:555.60px;top:37.60px;font-size:8px;line-height:9.60px;color:#1c1c1c;transform:scaleX(0.9733);">Правка</span>
<span class="t" style="left:591.60px;top:37.60px;font-size:8px;line-height:9.60px;color:#1c1c1c;transform:scaleX(1.0421);">Поиск</span>
<span class="t" style="left:624.00px;top:37.60px;font-size:8px;line-height:9.60px;color:#1c1c1c;transform:scaleX(0.9535);">Вид</span>
<span class="t" style="left:646.60px;top:37.60px;font-size:8px;line-height:9.60px;color:#1c1c1c;transform:scaleX(1.0208);">Кодировки</span>
<span class="t" style="left:696.30px;top:37.60px;font-size:8px;line-height:9.60px;color:#1c1c1c;transform:scaleX(0.9911);">Синтаксисы</span>
<span class="t" style="left:750.40px;top:37.60px;font-size:8px;line-height:9.60px;color:#1c1c1c;transform:scaleX(0.9969);">Опции</span>
<span class="t" style="left:784.10px;top:37.60px;font-size:8px;line-height:9.60px;color:#1c1c1c;transform:scaleX(1.0315);">Макросы</span>
<span class="t" style="left:827.90px;top:37.60px;font-size:8px;line-height:9.60px;color:#1c1c1c;transform:scaleX(0.9951);">Запуск</span>
<span class="t" style="left:863.00px;top:37.60px;font-size:8px;line-height:9.60px;color:#1c1c1c;transform:scaleX(0.9038);">TextFX</span>
<span class="t" style="left:894.80px;top:37.60px;font-size:8px;line-height:9.60px;color:#1c1c1c;transform:scaleX(1.0210);">Плагины</span>
<span class="t" style="left:938.00px;top:37.60px;font-size:8px;line-height:9.60px;color:#1c1c1c;transform:scaleX(0.9683);">Окна</span>
<span class="t" style="left:965.60px;top:37.60px;font-size:8px;line-height:9.60px;color:#1c1c1c;transform:scaleX(0.8542);">?</span>
<span class="t" style="left:1233.40px;top:38.04px;font-size:7.6px;line-height:9.12px;color:#444;transform:scaleX(1.0258);">X</span>
<div class="r" style="left:523px;top:48px;width:718.4000000000001px;height:0.8px;background:#ececec;"></div>
<div class="r" style="left:523px;top:65.3px;width:718.4000000000001px;height:0.8px;background:#e4e4e4;"></div>
<div class="r" style="left:831.3px;top:49.6px;width:15px;height:14.6px;background:#cce4f7;box-shadow:0 0 0 .5px #9ccaf0;"></div>
<div class="r" style="left:862.3px;top:49.6px;width:15px;height:14.6px;background:#cce4f7;box-shadow:0 0 0 .5px #9ccaf0;"></div>
<svg style="left:525.48px;top:50.88px;opacity:.8" width="11.04" height="11.04" viewBox="0 0 12 12"><rect x="2.8" y="0.8" width="8" height="10.2" fill="#fdfdfd" stroke="#d3d6da" stroke-width=".7"/><circle cx="8.600" cy="9" r="2.400" fill="#5a9a3c"/><circle cx="8.600" cy="9" r=".9" fill="#e9f6df"/></svg>
<svg style="left:540.68px;top:50.88px;opacity:.8" width="11.04" height="11.04" viewBox="0 0 12 12"><path d="M5 1h6v6H5z" fill="#9cc3ea"/><path d="M.6 4h4l1 1.200h5.400v6H.6z" fill="#f0cf7a"/><path d="M.6 11.200l1.800-4.600h9.200l-1.800 4.600z" fill="#f7e2a4"/></svg>
<svg style="left:555.88px;top:50.88px;opacity:.8" width="11.04" height="11.04" viewBox="0 0 12 12"><rect x=".8" y=".8" width="10.400" height="10.400" rx=".8" fill="#6d7580"/><rect x="2.600" y="1.400" width="6.800" height="3.800" fill="#eef1f5"/><rect x="3" y="7" width="6" height="4.200" fill="#c9ced6"/><rect x="4" y="7.800" width="1.600" height="2.600" fill="#565d67"/></svg>
<svg style="left:571.08px;top:50.88px;opacity:.8" width="11.04" height="11.04" viewBox="0 0 12 12"><rect x="3.600" y="3.600" width="7.600" height="7.600" rx=".8" fill="#8b9098"/><rect x=".8" y=".8" width="7.600" height="7.600" rx=".8" fill="#7a808a"/><rect x="2.200" y="1.400" width="4.800" height="2.600" fill="#e6e9ee"/><rect x="6" y="7.800" width="3.600" height="3.200" fill="#d5d9df"/></svg>
<svg style="left:586.48px;top:50.88px;opacity:.8" width="11.04" height="11.04" viewBox="0 0 12 12"><rect x="1.2" y="1.6" width="6" height="8" fill="#fbfbfb" stroke="#b7bbc0" stroke-width=".7"/><rect x="3" y="0.6" width="6.5" height="8.6" fill="#fdfdfd" stroke="#b7bbc0" stroke-width=".7"/><circle cx="8" cy="9" r="2.300" fill="#d9822b"/><circle cx="8" cy="9" r=".8" fill="#f8e3c8"/></svg>
<svg style="left:601.68px;top:50.88px;opacity:.8" width="11.04" height="11.04" viewBox="0 0 12 12"><rect x="0.8" y="0.6" width="5.5" height="7.6" fill="#fbfbfb" stroke="#b7bbc0" stroke-width=".7"/><rect x="2.6" y="1.8" width="5.5" height="7.6" fill="#fbfbfb" stroke="#b7bbc0" stroke-width=".7"/><rect x="4.4" y="3" width="5.5" height="7.6" fill="#fdfdfd" stroke="#b7bbc0" stroke-width=".7"/><circle cx="8.400" cy="9.400" r="2.200" fill="#d9822b"/><circle cx="8.400" cy="9.400" r=".8" fill="#f8e3c8"/></svg>
<svg style="left:616.88px;top:50.88px;opacity:.8" width="11.04" height="11.04" viewBox="0 0 12 12"><rect x="3" y=".8" width="6" height="4" fill="#f4f6f8" stroke="#8a8f96" stroke-width=".6"/><rect x=".8" y="4.400" width="10.400" height="4.800" rx=".8" fill="#a3a9b1" stroke="#737981" stroke-width=".6"/><rect x="2.600" y="7.400" width="6.800" height="3.800" fill="#f8f9fa" stroke="#8a8f96" stroke-width=".6"/></svg>
<div class="r" style="left:632.1px;top:50.5px;width:1px;height:12.5px;background:#b9b9b9;"></div>
<svg style="left:637.48px;top:50.88px;opacity:.8" width="11.04" height="11.04" viewBox="0 0 12 12"><path d="M4 .8L7.400 7.600M8 .8L4.600 7.600" stroke="#8b8f96" stroke-width="1.100"/><circle cx="3.600" cy="9.200" r="1.700" fill="none" stroke="#c62828" stroke-width="1.300"/><circle cx="8.400" cy="9.200" r="1.700" fill="none" stroke="#c62828" stroke-width="1.300"/></svg>
<svg style="left:652.78px;top:50.88px;opacity:.8" width="11.04" height="11.04" viewBox="0 0 12 12"><rect x="0.8" y="0.8" width="6" height="7.6" fill="#e9f1fb" stroke="#6f96c8" stroke-width=".7"/><rect x="4.4" y="3.2" width="6.4" height="8" fill="#f4f8fd" stroke="#6f96c8" stroke-width=".7"/></svg>
<svg style="left:668.28px;top:50.88px;opacity:.8" width="11.04" height="11.04" viewBox="0 0 12 12"><rect x=".8" y="1.600" width="8.400" height="9.600" rx=".8" fill="#d7b15c" stroke="#a8873f" stroke-width=".6"/><rect x="3" y=".6" width="4" height="2.200" fill="#8e939a"/><rect x="4.6" y="4.2" width="6.4" height="7.2" fill="#f1f6fc" stroke="#7f9cc4" stroke-width=".7"/></svg>
<div class="r" style="left:682.9px;top:50.5px;width:1px;height:12.5px;background:#b9b9b9;"></div>
<svg style="left:688.88px;top:50.88px;opacity:.8" width="11.04" height="11.04" viewBox="0 0 12 12"><path d="M4.800 3.200H7.400a2.900 2.900 0 0 1 0 5.800H3.400" fill="none" stroke="#6d7278" stroke-width="1.900"/><path d="M5.600 .8V5.600L1.600 3.200z" fill="#6d7278"/></svg>
<svg style="left:704.28px;top:50.88px;opacity:.8" width="11.04" height="11.04" viewBox="0 0 12 12"><path d="M7.200 3.200H4.600a2.900 2.900 0 0 0 0 5.800H8.600" fill="none" stroke="#8e939a" stroke-width="1.900"/><path d="M6.400 .8V5.600L10.400 3.200z" fill="#8e939a"/></svg>
<div class="r" style="left:719.5px;top:50.5px;width:1px;height:12.5px;background:#b9b9b9;"></div>
<svg style="left:724.88px;top:50.88px;opacity:.8" width="11.04" height="11.04" viewBox="0 0 12 12"><rect x="1" y="5" width="4.400" height="5.600" rx="1.200" fill="#2a2a2a"/><rect x="6.600" y="5" width="4.400" height="5.600" rx="1.200" fill="#2a2a2a"/><rect x="2" y="2" width="2.800" height="4" fill="#2a2a2a"/><rect x="7.200" y="2" width="2.800" height="4" fill="#2a2a2a"/><rect x="4.600" y="5.600" width="2.800" height="2" fill="#2a2a2a"/></svg>
<svg style="left:740.38px;top:50.88px;opacity:.8" width="11.04" height="11.04" viewBox="0 0 12 12"><text x=".4" y="5.600" font-family="Liberation Sans, sans-serif" font-size="6" font-weight="bold" fill="#2a6fc0">b</text><rect x="5.400" y="5.600" width="6" height="5.800" rx=".6" fill="#2e7ad1"/><rect x="6.600" y="6.600" width="3.600" height="1.600" fill="#e4effb"/><rect x="6.600" y="9.200" width="3.600" height="1.400" fill="#bcd6f2"/><path d="M4.600 2.400h3.600v2.200" fill="none" stroke="#2a6fc0" stroke-width=".9"/></svg>
<div class="r" style="left:756.1px;top:50.5px;width:1px;height:12.5px;background:#b9b9b9;"></div>
<svg style="left:761.48px;top:50.88px;opacity:.8" width="11.04" height="11.04" viewBox="0 0 12 12"><circle cx="5" cy="4.800" r="3.400" fill="#d9e8d6" stroke="#9aa3ab" stroke-width=".9"/><path d="M7.400 7.400L10.800 10.800" stroke="#7d8a5c" stroke-width="1.700"/><path d="M3.400 4.800h3.200M5 3.200v3.200" stroke="#4b9a3a" stroke-width=".9"/></svg>
<svg style="left:776.68px;top:50.88px;opacity:.8" width="11.04" height="11.04" viewBox="0 0 12 12"><circle cx="5" cy="4.800" r="3.400" fill="#ecdcdf" stroke="#a9a3ab" stroke-width=".9"/><path d="M7.400 7.400L10.800 10.800" stroke="#a0707a" stroke-width="1.700"/><path d="M3.400 4.800h3.200" stroke="#c03a4a" stroke-width=".9"/></svg>
<div class="r" style="left:791.3px;top:50.5px;width:1px;height:12.5px;background:#b9b9b9;"></div>
<svg style="left:796.78px;top:50.88px;opacity:.8" width="11.04" height="11.04" viewBox="0 0 12 12"><rect x="0.8" y="0.8" width="8" height="7" fill="#f6f7f9" stroke="#8f96a0" stroke-width=".7"/><rect x=".8" y=".8" width="8" height="1.800" fill="#7ea2cf"/><rect x="4" y="5" width="7.2" height="6" fill="#fbf3d0" stroke="#c9a23a" stroke-width=".7"/><path d="M5.400 7h4.400M5.400 9h4.400" stroke="#c9a23a" stroke-width=".8"/></svg>
<svg style="left:812.08px;top:50.88px;opacity:.8" width="11.04" height="11.04" viewBox="0 0 12 12"><rect x="0.8" y="0.8" width="8" height="7" fill="#f6f7f9" stroke="#8f96a0" stroke-width=".7"/><rect x=".8" y=".8" width="8" height="1.800" fill="#7ea2cf"/><rect x="4" y="5" width="7.2" height="6" fill="#fbf3d0" stroke="#c9a23a" stroke-width=".7"/><path d="M5.400 7h4.400M5.400 9h4.400" stroke="#c9a23a" stroke-width=".8"/></svg>
<div class="r" style="left:827.5px;top:50.5px;width:1px;height:12.5px;background:#b9b9b9;"></div>
<svg style="left:833.28px;top:50.88px;opacity:.8" width="11.04" height="11.04" viewBox="0 0 12 12"><path d="M1.600 3h8.800M1.600 6h7a1.600 1.600 0 0 1 0 3.200H6.400M1.600 9.200h2.800" fill="none" stroke="#2f74c0" stroke-width="1.200"/><path d="M7.200 7.800v2.800L5.400 9.200z" fill="#2f74c0"/></svg>
<svg style="left:847.88px;top:50.88px;opacity:.8" width="11.04" height="11.04" viewBox="0 0 12 12"><text x="2.400" y="10" font-family="Liberation Sans, sans-serif" font-size="10.500" fill="#4d7fc0">¶</text></svg>
<svg style="left:864.28px;top:50.88px;opacity:.8" width="11.04" height="11.04" viewBox="0 0 12 12"><path d="M2.400 1.200v9.600" stroke="#6b7fb0" stroke-width=".8" stroke-dasharray="1 1"/><path d="M1.200 2h9.200M4 4.400h6.400M4 6.800h5M4 9.200h6.400" stroke="#1f2a8c" stroke-width="1.300"/></svg>
<svg style="left:878.88px;top:50.88px;opacity:.8" width="11.04" height="11.04" viewBox="0 0 12 12"><rect x="0.8" y="1.6" width="10.4" height="8.8" fill="#fdf6d8" stroke="#b89a45" stroke-width=".7"/><rect x=".8" y="1.600" width="10.400" height="2" fill="#9aa7b8"/></svg>
<svg style="left:893.88px;top:50.88px;opacity:.8" width="11.04" height="11.04" viewBox="0 0 12 12"><rect x="0.8" y="1.2" width="10.4" height="9.6" fill="#e6d68a" stroke="#8b8f7a" stroke-width=".7"/><rect x="2" y="2.600" width="8" height="6.800" fill="#d4c05f"/></svg>
<svg style="left:909.48px;top:50.88px;opacity:.8" width="11.04" height="11.04" viewBox="0 0 12 12"><rect x="3.4" y="0.8" width="7.6" height="10.4" fill="#fdfdfd" stroke="#9aa0a8" stroke-width=".7"/><path d="M1 10.600C3 9.800 4.400 7.600 5 4.600C5.400 2.600 6.200 1.800 7.400 2.200" fill="none" stroke="#c62828" stroke-width="1.400"/><path d="M2.800 5.600h4" stroke="#c62828" stroke-width="1.100"/></svg>
<svg style="left:924.68px;top:50.88px;opacity:.8" width="11.04" height="11.04" viewBox="0 0 12 12"><path d="M.8 2.600h3.800l1 1.200h5.600v6.800H.8z" fill="#eeb9c0"/><path d="M.8 10.600l1.400-4.800h9.600l-1.400 4.800z" fill="#f6d5d9"/></svg>
<div class="r" style="left:939.9px;top:50.5px;width:1px;height:12.5px;background:#b9b9b9;"></div>
<svg style="left:945.48px;top:50.88px;opacity:.8" width="11.04" height="11.04" viewBox="0 0 12 12"><rect x="1" y="1" width="10" height="10" fill="#fbfbfb" stroke="#9a9a9a" stroke-width=".7"/><circle cx="6" cy="6" r="2.700" fill="#d21f2b"/></svg>
<svg style="left:960.68px;top:50.88px;opacity:.8" width="11.04" height="11.04" viewBox="0 0 12 12"><rect x="1" y="1" width="10" height="10" fill="#fbfbfb" stroke="#a5a5a5" stroke-width=".7"/><rect x="3.800" y="3.800" width="4.400" height="4.400" fill="#8d8d8d"/></svg>
<svg style="left:976.08px;top:50.88px;opacity:.8" width="11.04" height="11.04" viewBox="0 0 12 12"><rect x="1" y="1" width="10" height="10" fill="#fbfbfb" stroke="#a5a5a5" stroke-width=".7"/><path d="M4.400 3.400L8.200 6L4.400 8.600z" fill="#8d8d8d"/></svg>
<svg style="left:991.38px;top:50.88px;opacity:.8" width="11.04" height="11.04" viewBox="0 0 12 12"><rect x="1" y="1" width="10" height="10" fill="#e7eefb" stroke="#7f97c8" stroke-width=".7"/><path d="M2.800 3.400L6 6L2.800 8.600zM6 3.400L9.400 6L6 8.600z" fill="#3c66c4"/></svg>
<svg style="left:1006.88px;top:50.88px;opacity:.8" width="11.04" height="11.04" viewBox="0 0 12 12"><rect x="0.8" y="0.8" width="8.4" height="7.6" fill="#d6d9de" stroke="#7d828a" stroke-width=".7"/><rect x=".8" y=".8" width="8.400" height="1.800" fill="#8d939c"/><rect x="4.400" y="5" width="6.800" height="6.400" rx=".6" fill="#7a808a"/><rect x="5.600" y="5.600" width="4.400" height="2.200" fill="#e4e7eb"/></svg>
<div class="r" style="left:1021.7px;top:50.5px;width:1px;height:12.5px;background:#b9b9b9;"></div>
<svg style="left:1027.68px;top:50.88px;opacity:.8" width="11.04" height="11.04" viewBox="0 0 12 12"><path d="M1.400 2.400h9.200L7.800 5h-3.600zM1.400 9.800h9.200L7.800 7.200h-3.600z" fill="#2f6fc4"/><rect x="3.800" y="5" width="4.400" height="2.200" fill="#2f6fc4"/></svg>
<svg style="left:1043.08px;top:50.88px;opacity:.8" width="11.04" height="11.04" viewBox="0 0 12 12"><path d="M6 3.200L10.600 8H1.400z" fill="#5e8fd2"/><path d="M1.400 8.800h9.200" stroke="#9db9e2" stroke-width=".9"/></svg>
<svg style="left:1058.48px;top:50.88px;opacity:.8" width="11.04" height="11.04" viewBox="0 0 12 12"><path d="M6 8.800L10.600 4H1.400z" fill="#5e8fd2"/><path d="M1.400 3.200h9.200" stroke="#9db9e2" stroke-width=".9"/></svg>
<svg style="left:1073.68px;top:50.88px;opacity:.8" width="11.04" height="11.04" viewBox="0 0 12 12"><path d="M1.400 2.400h9.200L7.800 5h-3.600zM1.400 9.800h9.200L7.800 7.200h-3.600z" fill="#2f6fc4"/><rect x="3.800" y="5" width="4.400" height="2.200" fill="#2f6fc4"/></svg>
<svg style="left:1089.28px;top:50.88px;opacity:.8" width="11.04" height="11.04" viewBox="0 0 12 12"><path d="M1 2.400h4l1 1.200h5v4.800H1z" fill="#efd27a"/><rect x="3.600" y="6.800" width="7.600" height="4" rx=".6" fill="#6f6a4f"/><rect x="4.600" y="7.600" width="5.600" height="1.400" fill="#d9d2a8"/></svg>
<svg style="left:1104.28px;top:50.88px;opacity:.8" width="11.04" height="11.04" viewBox="0 0 12 12"><rect x="1.6" y="0.8" width="8.4" height="9" fill="#fcfcfc" stroke="#9a9fa6" stroke-width=".7"/><rect x="2.400" y="7.200" width="8.800" height="4" rx=".6" fill="#4d5158"/><rect x="3.600" y="8" width="2.400" height="1.600" fill="#cfd3d8"/><rect x="7.600" y="8" width="2.400" height="1.600" fill="#cfd3d8"/></svg>
<svg style="left:1119.88px;top:50.88px;opacity:.8" width="11.04" height="11.04" viewBox="0 0 12 12"><text x="1.600" y="4.800" font-family="Liberation Sans, sans-serif" font-size="4.600" font-weight="bold" fill="#3d8f8a">ABC</text><path d="M2.400 7.200L5.400 10.400L10.800 3.600" fill="none" stroke="#2f6fa8" stroke-width="1.700"/></svg>
<div class="r" style="left:523px;top:66px;width:718.4000000000001px;height:18px;background:#f0f0f0;"></div>
<div class="r" style="left:524.3px;top:68.6px;width:47px;height:13.6px;background:#c6c6c6;box-shadow:0 0 0 .5px #b0b0b0;"></div>
<svg style="left:526.3px;top:70.8px" width="9" height="9" viewBox="0 0 9 9"><rect x=".3" y=".3" width="8.400" height="8.400" rx=".8" fill="#4a97e8"/><rect x="1.600" y="1" width="5.800" height="3.200" fill="#8cc3f5"/><rect x="2.200" y="5.600" width="4.600" height="3.100" fill="#d7e9fb"/></svg>
<span class="t" style="left:536.60px;top:72.26px;font-size:7.4px;line-height:8.88px;color:#909090;transform:scaleX(0.9523);">new 1.txt</span>
<div class="r" style="left:573.2px;top:68.6px;width:51.5px;height:13.6px;background:#c6c6c6;box-shadow:0 0 0 .5px #b0b0b0;"></div>
<svg style="left:575.4px;top:70.8px" width="9" height="9" viewBox="0 0 9 9"><rect x=".3" y=".3" width="8.400" height="8.400" rx=".8" fill="#4a97e8"/><rect x="1.600" y="1" width="5.800" height="3.200" fill="#8cc3f5"/><rect x="2.200" y="5.600" width="4.600" height="3.100" fill="#d7e9fb"/></svg>
<span class="t" style="left:585.60px;top:72.26px;font-size:7.4px;line-height:8.88px;color:#909090;transform:scaleX(0.9583);">Euler8.cpp</span>
<div class="r" style="left:626.6px;top:67px;width:45.5px;height:16.4px;background:#f6f6f6;box-shadow:0 0 0 .5px #a9a9a9;"></div>
<div class="r" style="left:626.6px;top:67px;width:45.5px;height:2.5px;background:#eeaa50;"></div>
<svg style="left:630px;top:70.8px" width="9" height="9" viewBox="0 0 9 9"><rect x=".3" y=".3" width="8.400" height="8.400" rx=".8" fill="#3f8fe6"/><rect x="1.600" y="1" width="5.800" height="3.200" fill="#eaf3fd"/><rect x="2.200" y="5.600" width="4.600" height="3.100" fill="#d7e9fb"/></svg>
<span class="t" style="left:640.40px;top:71.74px;font-size:7.6px;line-height:9.12px;color:#222;transform:scaleX(0.9469);">funcs.h</span>
<div class="r" style="left:523.5px;top:83.5px;width:717.5px;height:1.6px;background:#8d8d8d;"></div>
<div class="r" style="left:523.5px;top:83.5px;width:1.2px;height:543.0px;background:#9a9a9a;"></div>
<div class="r" style="left:524.7px;top:85px;width:30px;height:541.5px;background:#e4e4e4;"></div>
<div class="r" style="left:554.7px;top:85px;width:10.3px;height:541.5px;background:#f3f3f3;"></div>
<div class="r" style="left:565px;top:529.2px;width:663px;height:12.0px;background:#e8e8ff;"></div>
<div class="r" style="left:565px;top:529.2px;width:202.69199999999998px;height:12.05px;background:#c0c0c0;"></div>
<div class="r" style="left:565px;top:541.2px;width:197.35799999999998px;height:12.05px;background:#c0c0c0;"></div>
<div class="r" style="left:565px;top:553.2px;width:154.68599999999998px;height:12.05px;background:#c0c0c0;"></div>
<div class="r" style="left:565px;top:565.2px;width:229.362px;height:12.05px;background:#c0c0c0;"></div>
<div class="r" style="left:565px;top:577.2px;width:133.35px;height:12.05px;background:#c0c0c0;"></div>
<div class="r" style="left:565px;top:589.2px;width:298.70399999999995px;height:12.05px;background:#c0c0c0;"></div>
<div class="r" style="left:565px;top:601.2px;width:170.688px;height:12.05px;background:#c0c0c0;"></div>
<div class="r" style="left:565px;top:613.2px;width:111.26723999999999px;height:12.05px;background:#c0c0c0;"></div>
<div class="r" style="left:586.84px;top:157.20px;width:0;height:12.00px;border-left:1px dotted #c9c9c9;opacity:.8"></div>
<div class="r" style="left:586.84px;top:229.20px;width:0;height:12.00px;border-left:1px dotted #c9c9c9;opacity:.8"></div>
<div class="r" style="left:586.84px;top:313.20px;width:0;height:36.00px;border-left:1px dotted #c9c9c9;opacity:.8"></div>
<div class="r" style="left:586.84px;top:577.20px;width:0;height:36.00px;border-left:1px dotted #dedede;opacity:.8"></div>
<div class="r" style="left:608.17px;top:589.20px;width:0;height:24.00px;border-left:1px dotted #dedede;opacity:.8"></div>
<div class="r" style="left:629.51px;top:601.20px;width:0;height:12.00px;border-left:1px dotted #dedede;opacity:.8"></div>
<div class="r" style="left:559.8499999999999px;top:94.8px;width:0.9px;height:434.4px;background:#808080;"></div>
<div class="r" style="left:559.8499999999999px;top:529.2px;width:0.9px;height:98.4px;background:#c0504d;"></div>
<div class="r" style="left:559.8499999999999px;top:186.75px;width:4px;height:0.9px;background:#808080;"></div>
<div class="r" style="left:559.8499999999999px;top:258.75px;width:4px;height:0.9px;background:#808080;"></div>
<div class="r" style="left:559.8499999999999px;top:342.75px;width:4px;height:0.9px;background:#808080;"></div>
<div class="r" style="left:559.8499999999999px;top:366.75px;width:4px;height:0.9px;background:#808080;"></div>
<div class="r" style="left:559.8499999999999px;top:450.75px;width:4px;height:0.9px;background:#808080;"></div>
<div class="r" style="left:559.8499999999999px;top:522.75px;width:4px;height:0.9px;background:#808080;"></div>
<svg style="left:556.35px;top:87.30px" width="8" height="8" viewBox="0 0 8 8"><rect x=".5" y=".5" width="6.900" height="6.900" fill="#fff" stroke="#808080" stroke-width=".9"/><path d="M2.100 3.950h3.700" stroke="#808080" stroke-width=".9"/></svg>
<svg style="left:556.35px;top:135.30px" width="8" height="8" viewBox="0 0 8 8"><rect x=".5" y=".5" width="6.900" height="6.900" fill="#fff" stroke="#808080" stroke-width=".9"/><path d="M2.100 3.950h3.700" stroke="#808080" stroke-width=".9"/></svg>
<svg style="left:556.35px;top:207.30px" width="8" height="8" viewBox="0 0 8 8"><rect x=".5" y=".5" width="6.900" height="6.900" fill="#fff" stroke="#808080" stroke-width=".9"/><path d="M2.100 3.950h3.700" stroke="#808080" stroke-width=".9"/></svg>
<svg style="left:556.35px;top:279.30px" width="8" height="8" viewBox="0 0 8 8"><rect x=".5" y=".5" width="6.900" height="6.900" fill="#fff" stroke="#808080" stroke-width=".9"/><path d="M2.100 3.950h3.700" stroke="#808080" stroke-width=".9"/></svg>
<svg style="left:556.35px;top:303.30px" width="8" height="8" viewBox="0 0 8 8"><rect x=".5" y=".5" width="6.900" height="6.900" fill="#fff" stroke="#808080" stroke-width=".9"/><path d="M2.100 3.950h3.700" stroke="#808080" stroke-width=".9"/></svg>
<svg style="left:556.35px;top:387.30px" width="8" height="8" viewBox="0 0 8 8"><rect x=".5" y=".5" width="6.900" height="6.900" fill="#fff" stroke="#808080" stroke-width=".9"/><path d="M2.100 3.950h3.700" stroke="#808080" stroke-width=".9"/></svg>
<svg style="left:556.35px;top:471.30px" width="8" height="8" viewBox="0 0 8 8"><rect x=".5" y=".5" width="6.900" height="6.900" fill="#fff" stroke="#808080" stroke-width=".9"/><path d="M2.100 3.950h3.700" stroke="#808080" stroke-width=".9"/></svg>
<svg style="left:556.35px;top:531.30px" width="8" height="8" viewBox="0 0 8 8"><rect x=".5" y=".5" width="6.900" height="6.900" fill="#fff" stroke="#d9534f" stroke-width=".9"/><path d="M2.100 3.950h3.700" stroke="#d9534f" stroke-width=".9"/></svg>
<div class="ln"><div>1</div><div>2</div><div>3</div><div>4</div><div>5</div><div>6</div><div>7</div><div>8</div><div>9</div><div>10</div><div>11</div><div>12</div><div>13</div><div>14</div><div>15</div><div>16</div><div>17</div><div>18</div><div>19</div><div>20</div><div>21</div><div>22</div><div>23</div><div>24</div><div>25</div><div>26</div><div>27</div><div>28</div><div>29</div><div>30</div><div>31</div><div>32</div><div>33</div><div>34</div><div>35</div><div>36</div><div>37</div><div>38</div><div>39</div><div>40</div><div>41</div><div>42</div><div>43</div><div>44</div><div>45</div></div>
<div class="code"><div><span class="pp">#ifndef FUNCSHEADER</span></div><div><span class="pp">#define FUNCSHEADER</span></div><div> </div><div><span class="ty">template</span><span class="o">&lt;</span><span class="ty">class</span> T<span class="o">&gt;</span></div><div>ostream <span class="o">&amp;</span><span class="k">operator</span><span class="o">&lt;</span><span class="o">&lt;</span><span class="o">(</span>ostream <span class="o">&amp;</span>out<span class="o">,</span> <span class="ty">const</span> vector<span class="o">&lt;</span>T<span class="o">&gt;</span> <span class="o">&amp;</span>v<span class="o">)</span> <span class="o">{</span></div><div>    <span class="k">for</span><span class="o">(</span>vector<span class="o">&lt;</span>T<span class="o">&gt;</span><span class="o">:</span><span class="o">:</span>const_iterator it<span class="o">=</span>v<span class="o">.</span>begin<span class="o">(</span><span class="o">)</span><span class="o">;</span>it<span class="o">!</span><span class="o">=</span>v<span class="o">.</span>end<span class="o">(</span><span class="o">)</span><span class="o">;</span><span class="o">+</span><span class="o">+</span>it<span class="o">)</span></div><div>        out <span class="o">&lt;</span><span class="o">&lt;</span> <span class="o">*</span>it <span class="o">&lt;</span><span class="o">&lt;</span> <span class="s">" "</span><span class="o">;</span></div><div>    <span class="k">return</span> out<span class="o">;</span></div><div><span class="o">}</span></div><div> </div><div>ostream <span class="o">&amp;</span><span class="k">operator</span><span class="o">&lt;</span><span class="o">&lt;</span><span class="o">(</span>ostream <span class="o">&amp;</span>out<span class="o">,</span> <span class="ty">const</span> vector<span class="o">&lt;</span><span class="ty">char</span><span class="o">&gt;</span> <span class="o">&amp;</span>v<span class="o">)</span> <span class="o">{</span></div><div>    <span class="k">for</span><span class="o">(</span>vector<span class="o">&lt;</span><span class="ty">char</span><span class="o">&gt;</span><span class="o">:</span><span class="o">:</span>const_iterator it<span class="o">=</span>v<span class="o">.</span>begin<span class="o">(</span><span class="o">)</span><span class="o">;</span>it<span class="o">!</span><span class="o">=</span>v<span class="o">.</span>end<span class="o">(</span><span class="o">)</span><span class="o">;</span><span class="o">+</span><span class="o">+</span>it<span class="o">)</span></div><div>        out <span class="o">&lt;</span><span class="o">&lt;</span> <span class="ty">int</span><span class="o">(</span><span class="o">*</span>it<span class="o">)</span> <span class="o">&lt;</span><span class="o">&lt;</span> <span class="s">" "</span><span class="o">;</span></div><div>    <span class="k">return</span> out<span class="o">;</span></div><div><span class="o">}</span></div><div> </div><div><span class="ty">bool</span> isPalindrom<span class="o">(</span><span class="ty">int</span> x<span class="o">)</span> <span class="o">{</span></div><div>    <span class="ty">int</span> tmp <span class="o">=</span> x<span class="o">,</span> y<span class="o">=</span><span class="n">0</span><span class="o">;</span></div><div>    <span class="k">while</span><span class="o">(</span>tmp<span class="o">&gt;</span><span class="n">0</span><span class="o">)</span> <span class="o">{</span></div><div>        y <span class="o">=</span> y<span class="o">*</span><span class="n">10</span><span class="o">+</span>tmp<span class="o">%</span><span class="n">10</span><span class="o">;</span></div><div>        tmp<span class="o">/</span><span class="o">=</span><span class="n">10</span><span class="o">;</span></div><div>    <span class="o">}</span></div><div>    <span class="k">return</span> x<span class="o">=</span><span class="o">=</span>y<span class="o">;</span></div><div><span class="o">}</span></div><div> </div><div><span class="ty">bool</span> isPrime<span class="o">(</span><span class="ty">int</span> x<span class="o">)</span> <span class="o">{</span></div><div>    <span class="k">if</span><span class="o">(</span>x<span class="o">&lt;</span><span class="n">2</span><span class="o">)</span> <span class="k">return</span> <span class="k">false</span><span class="o">;</span></div><div>    <span class="ty">int</span> delim <span class="o">=</span> <span class="k">static_cast</span><span class="o">&lt;</span><span class="ty">int</span><span class="o">&gt;</span><span class="o">(</span>sqrt<span class="o">(</span><span class="ty">double</span><span class="o">(</span>x<span class="o">)</span><span class="o">)</span><span class="o">)</span><span class="o">;</span></div><div>    <span class="k">while</span><span class="o">(</span>x<span class="o">%</span>delim<span class="o">)</span> delim<span class="o">-</span><span class="o">-</span><span class="o">;</span></div><div>    <span class="k">return</span> delim<span class="o">=</span><span class="o">=</span><span class="n">1</span><span class="o">;</span></div><div><span class="o">}</span></div><div> </div><div><span class="ty">bool</span> isPrime<span class="o">(</span>Integer x<span class="o">)</span> <span class="o">{</span></div><div>    Integer delim <span class="o">=</span> x<span class="o">/</span><span class="n">2</span><span class="o">;</span></div><div>    <span class="k">while</span><span class="o">(</span>x<span class="o">%</span>delim<span class="o">!</span><span class="o">=</span><span class="n">0</span><span class="o">)</span> delim<span class="o">-</span><span class="o">-</span><span class="o">;</span></div><div>    <span class="k">return</span> delim<span class="o">=</span><span class="o">=</span><span class="n">1</span><span class="o">;</span></div><div><span class="o">}</span></div><div>vector<span class="o">&lt;</span><span class="ty">bool</span><span class="o">&gt;</span> makeSieve<span class="o">(</span>size_t size<span class="o">)</span> <span class="o">{</span></div><div>    vector<span class="o">&lt;</span><span class="ty">bool</span><span class="o">&gt;</span> sieve<span class="o">(</span>size<span class="o">+</span><span class="n">1</span><span class="o">,</span><span class="k">true</span><span class="o">)</span><span class="o">;</span></div><div>    sieve<span class="o">[</span><span class="n">0</span><span class="o">]</span><span class="o">=</span>sieve<span class="o">[</span><span class="n">1</span><span class="o">]</span><span class="o">=</span><span class="k">false</span><span class="o">;</span></div><div>    <span class="k">for</span><span class="o">(</span>size_t index<span class="o">=</span><span class="n">2</span><span class="o">;</span>index<span class="o">&lt;</span>size<span class="o">;</span><span class="o">+</span><span class="o">+</span>index<span class="o">)</span></div><div>        <span class="k">if</span><span class="o">(</span>sieve<span class="o">[</span>index<span class="o">]</span><span class="o">)</span></div><div>            <span class="k">for</span><span class="o">(</span>size_t i<span class="o">=</span><span class="n">2</span><span class="o">*</span>index<span class="o">;</span> i<span class="o">&lt;</span>size<span class="o">+</span><span class="n">1</span><span class="o">;</span> i <span class="o">+</span><span class="o">=</span> index<span class="o">)</span></div><div>                sieve<span class="o">[</span>i<span class="o">]</span><span class="o">=</span><span class="k">false</span><span class="o">;</span></div><div>    <span class="k">return</span> sieve<span class="o">;</span></div></div>
<div class="r" style="left:1228.4px;top:85px;width:12.6px;height:541.5px;background:#f3f3f3;"></div>
<div class="r" style="left:1229.5px;top:96.2px;width:10.2px;height:263.6px;background:#cdcdcd;"></div>
<svg style="left:1231.600px;top:88.800px" width="6" height="4.300" viewBox="0 0 7 5"><path d="M.6 4.200L3.500 1.200L6.400 4.200" fill="none" stroke="#505050" stroke-width="1.100"/></svg>
<svg style="left:1231.600px;top:617.600px" width="6" height="4.300" viewBox="0 0 7 5"><path d="M.6 .8L3.500 3.800L6.400 .8" fill="none" stroke="#505050" stroke-width="1.100"/></svg>
<div class="r" style="left:522px;top:626.5px;width:720.4000000000001px;height:16px;background:#f0f0f0;"></div>
<div class="r" style="left:522px;top:626.2px;width:720.4000000000001px;height:1.2px;background:#9f9f9f;"></div>
<div class="r" style="left:748.5px;top:628.5px;width:1px;height:12.5px;background:#e4e4e4;"></div>
<div class="r" style="left:749.5px;top:628.5px;width:1px;height:12.5px;background:#fbfbfb;"></div>
<div class="r" style="left:880px;top:628.5px;width:1px;height:12.5px;background:#e4e4e4;"></div>
<div class="r" style="left:881px;top:628.5px;width:1px;height:12.5px;background:#fbfbfb;"></div>
<div class="r" style="left:1056px;top:628.5px;width:1px;height:12.5px;background:#e4e4e4;"></div>
<div class="r" style="left:1057px;top:628.5px;width:1px;height:12.5px;background:#fbfbfb;"></div>
<div class="r" style="left:1126px;top:628.5px;width:1px;height:12.5px;background:#e4e4e4;"></div>
<div class="r" style="left:1127px;top:628.5px;width:1px;height:12.5px;background:#fbfbfb;"></div>
<div class="r" style="left:1198px;top:628.5px;width:1px;height:12.5px;background:#e4e4e4;"></div>
<div class="r" style="left:1199px;top:628.5px;width:1px;height:12.5px;background:#fbfbfb;"></div>
<div class="r" style="left:1226px;top:628.5px;width:1px;height:12.5px;background:#e4e4e4;"></div>
<div class="r" style="left:1227px;top:628.5px;width:1px;height:12.5px;background:#fbfbfb;"></div>
<span class="t" style="left:524.60px;top:631.12px;font-size:7.8px;line-height:9.36px;color:#2b2b2b;transform:scaleX(1.0084);">C++ source file</span>
<span class="t" style="left:752.20px;top:631.12px;font-size:7.8px;line-height:9.36px;color:#2b2b2b;transform:scaleX(0.9933);">length : 2015</span>
<span class="t" style="left:804.60px;top:631.12px;font-size:7.8px;line-height:9.36px;color:#2b2b2b;transform:scaleX(0.9674);">lines : 88</span>
<span class="t" style="left:885.40px;top:631.12px;font-size:7.8px;line-height:9.36px;color:#2b2b2b;transform:scaleX(0.9559);">Ln : 38</span>
<span class="t" style="left:916.20px;top:631.12px;font-size:7.8px;line-height:9.36px;color:#2b2b2b;transform:scaleX(0.9671);">Col : 1</span>
<span class="t" style="left:946.00px;top:631.12px;font-size:7.8px;line-height:9.36px;color:#2b2b2b;transform:scaleX(0.9256);">Sel : 250 | 9</span>
<span class="t" style="left:1058.40px;top:631.12px;font-size:7.8px;line-height:9.36px;color:#2b2b2b;transform:scaleX(1.0487);">Dos\Windows</span>
<span class="t" style="left:1132.00px;top:631.12px;font-size:7.8px;line-height:9.36px;color:#2b2b2b;transform:scaleX(0.9685);">UTF-8</span>
<span class="t" style="left:1211.80px;top:631.12px;font-size:7.8px;line-height:9.36px;color:#2b2b2b;transform:scaleX(0.9844);">INS</span>
<svg style="left:1233px;top:633px" width="8" height="8" viewBox="0 0 8 8"><path d="M7 1v1M7 4v1M4 4v1M7 6.500v1M4 6.500v1M1.500 6.500v1" stroke="#b5b5b5" stroke-width="1.200"/></svg>
<div class="r" style="left:0px;top:700.2px;width:1280px;height:19.799999999999955px;background:#1d2d35;"></div>
<svg style="left:6.200px;top:704.200px" width="12" height="12" viewBox="0 0 12 12"><path d="M0 1.700L4.900 1V5.700H0zM5.500 .9L12 0V5.700H5.500zM0 6.300H4.900V11L0 10.300zM5.500 6.300H12V12L5.500 11.100z" fill="#fff"/></svg>
<svg style="left:29.500px;top:704px" width="13" height="13" viewBox="0 0 13 13"><circle cx="8" cy="4.800" r="3.500" fill="none" stroke="#f2f2f2" stroke-width="1.300"/><path d="M5.600 7.400L.9 12.100" stroke="#f2f2f2" stroke-width="1.500"/></svg>
<svg style="left:52.500px;top:704.400px" width="15" height="12" viewBox="0 0 15 12"><rect x="3.800" y=".8" width="7.400" height="9.800" fill="none" stroke="#f2f2f2" stroke-width="1.200"/><path d="M2.200 2.200H.8v7h1.400M12.800 2.200h1.400v7h-1.400" fill="none" stroke="#f2f2f2" stroke-width="1.200"/></svg>
<svg style="left:80px;top:704.600px" width="11" height="11" viewBox="0 0 11 11"><circle cx="5.500" cy="5.500" r="5.200" fill="#dd4b3e"/><path d="M5.500 5.500L.9 3.100A5.200 5.200 0 0 0 4.400 10.600z" fill="#2da94f"/><path d="M5.500 5.500L4.400 10.600A5.200 5.200 0 0 0 10.500 4z" fill="#fdd00e"/><circle cx="5.500" cy="5.500" r="2.300" fill="#f1f1f1"/><circle cx="5.500" cy="5.500" r="1.700" fill="#4a8af4"/></svg>
<div class="r" style="left:526.7px;top:700.2px;width:106.59999999999991px;height:19.799999999999955px;background:#3b4c55;"></div>
<div class="r" style="left:101.3px;top:718.4px;width:104.1px;height:1.6px;background:#8fb4c3;"></div>
<div class="r" style="left:208.0px;top:718.4px;width:104.00000000000003px;height:1.6px;background:#8fb4c3;"></div>
<div class="r" style="left:314.6px;top:718.4px;width:104.1px;height:1.6px;background:#8fb4c3;"></div>
<div class="r" style="left:421.3px;top:718.4px;width:104.10000000000005px;height:1.6px;background:#8fb4c3;"></div>
<div class="r" style="left:526.7px;top:718.4px;width:106.59999999999991px;height:1.6px;background:#a9c9d6;"></div>
<div class="r" style="left:634.5999999999999px;top:718.4px;width:104.10000000000005px;height:1.6px;background:#8fb4c3;"></div>
<svg style="left:104.2px;top:704.800px" width="10" height="11" viewBox="0 0 10 11"><path d="M.4 .6h7.200l2 2v8H.4z" fill="#a2d866"/><path d="M2 3.600h3.600M2 5.600h2.400" stroke="#eaf7d8" stroke-width="1"/><circle cx="6.600" cy="7" r="1.800" fill="none" stroke="#3c7a1e" stroke-width="1"/><path d="M7.600 8.400l1.200 1.600" stroke="#3c7a1e" stroke-width="1"/></svg>
<span class="t" style="left:117.20px;top:705.20px;font-size:8px;line-height:9.60px;color:#ffffff;transform:scaleX(0.9840);">Qt Assistant</span>
<svg style="left:211.2px;top:704.800px" width="10" height="11" viewBox="0 0 10 11"><path d="M1.400 .4h6l2.200 2.200v8H1.400z" fill="#f4f1f0"/><rect x=".2" y="1.400" width="5.600" height="3" fill="#d8281f"/><path d="M5.600 5C5.800 7 4.600 8.800 3.400 9.800M5.600 5C5.600 7 7 8.200 8.600 8.400" fill="none" stroke="#c7313a" stroke-width=".9"/></svg>
<span class="t" style="left:224.00px;top:705.20px;font-size:8px;line-height:9.60px;color:#ffffff;transform:scaleX(1.0305);">InstallingQt.pdf - Ado...</span>
<svg style="left:319px;top:704.800px" width="9" height="11" viewBox="0 0 9 11"><path d="M.4 .6h6l.8 1h1.400v9H.4z" fill="#f6d877"/><path d="M.4 .6l2.400 1.200v9.200L.4 10.600z" fill="#f0c95a"/></svg>
<span class="t" style="left:331.80px;top:705.20px;font-size:8px;line-height:9.60px;color:#ffffff;transform:scaleX(0.9840);">TextEditor</span>
<svg style="left:425.6px;top:704.800px" width="9" height="11" viewBox="0 0 9 11"><path d="M.4 .6h6l.8 1h1.400v9H.4z" fill="#f6d877"/><path d="M.4 .6l2.400 1.200v9.200L.4 10.600z" fill="#f0c95a"/></svg>
<span class="t" style="left:438.20px;top:705.20px;font-size:8px;line-height:9.60px;color:#ffffff;transform:scaleX(0.9255);">Euler8</span>
<svg style="left:531.6px;top:704.800px" width="10" height="11" viewBox="0 0 10 11"><rect x=".6" y="1.600" width="7.400" height="8.600" fill="#f0f4d4" stroke="#8aa35c" stroke-width=".7"/><rect x="1.400" y="5.400" width="5.800" height="4" fill="#a5c748"/><path d="M5.400 5.200L9.200 .8" stroke="#2b2e1c" stroke-width="1.200"/></svg>
<span class="t" style="left:545.60px;top:705.20px;font-size:8px;line-height:9.60px;color:#ffffff;transform:scaleX(0.9728);">C:\Users\Max\Deskto...</span>
<svg style="left:639.2px;top:704.800px" width="10" height="11" viewBox="0 0 10 11"><path d="M.4 .6h7.200l2 2v8H.4z" fill="#a2d866"/><path d="M2 3.600h3.600M2 5.600h2.400" stroke="#eaf7d8" stroke-width="1"/><circle cx="6.600" cy="7" r="1.800" fill="none" stroke="#3c7a1e" stroke-width="1"/><path d="M7.600 8.400l1.200 1.600" stroke="#3c7a1e" stroke-width="1"/></svg>
<span class="t" style="left:652.60px;top:705.20px;font-size:8px;line-height:9.60px;color:#ffffff;transform:scaleX(1.0226);">mainwindow.cpp - Te...</span>
<svg style="left:1174.500px;top:707px" width="8" height="6" viewBox="0 0 8 6"><path d="M.6 4.800L4 1.400L7.400 4.800" fill="none" stroke="#f2f2f2" stroke-width="1.100"/></svg>
<svg style="left:1189px;top:705px" width="11" height="11" viewBox="0 0 11 11"><path d="M.6 .6h9.800v7.400H6.600L5 10.200V8H.6z" fill="#f2f2f2"/></svg>
<span class="t" style="left:1206.60px;top:705.44px;font-size:7.6px;line-height:9.12px;color:#fff;transform:scaleX(0.9351);">ENG</span>
<span class="t" style="left:1244.20px;top:705.44px;font-size:7.6px;line-height:9.12px;color:#fff;transform:scaleX(0.9736);">0:59</span>
<div class="r" style="left:1276.6px;top:700.2px;width:0.8px;height:19.799999999999955px;background:#5c6b72;"></div>
<svg style="left:622px;top:693.200px" width="8.400" height="12.600" viewBox="0 0 10 15"><path d="M.7 .8V11.600L3.300 9.200L5.200 13.600L6.900 12.800L5 8.600H8.600z" fill="#fff" stroke="#222" stroke-width=".8" stroke-linejoin="round"/></svg>
</div>
</body></html>
